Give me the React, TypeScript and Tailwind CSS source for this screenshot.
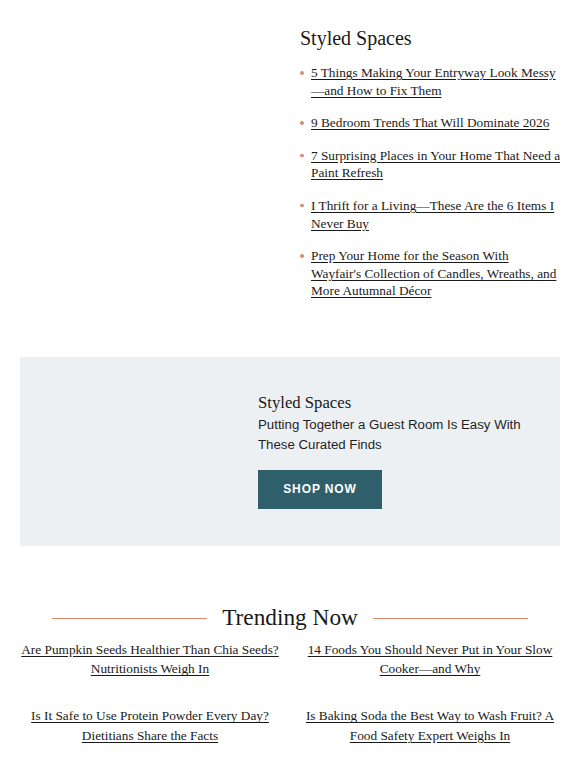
import React from "react";

const styled: React.ReactNode[] = [
  "5 Things Making Your Entryway Look Messy—and How to Fix Them",
  "9 Bedroom Trends That Will Dominate 2026",
  "7 Surprising Places in Your Home That Need a Paint Refresh",
  "I Thrift for a Living—These Are the 6 Items I Never Buy",
  <>
    Prep Your Home for the Season With
    <br />
    Wayfair's Collection of Candles, Wreaths, and More Autumnal Décor
  </>,
];

const trending = [
  "Are Pumpkin Seeds Healthier Than Chia Seeds? Nutritionists Weigh In",
  "14 Foods You Should Never Put in Your Slow Cooker—and Why",
  "Is It Safe to Use Protein Powder Every Day? Dietitians Share the Facts",
  "Is Baking Soda the Best Way to Wash Fruit? A Food Safety Expert Weighs In",
];

export default function App() {
  return (
    <div className="w-[580px] bg-white text-[#1a1a1a] font-['Liberation_Serif','Times_New_Roman',serif]">
      <div className="flex pl-[300px] pt-[25px]">
        <div className="w-[262px]">
          <h2 className="text-[20px] leading-[26px] font-normal">Styled Spaces</h2>
          <ul className="mt-[13px] flex flex-col gap-[15px]">
            {styled.map((t, i) => (
              <li key={i} className="flex text-[13.3px] leading-[17.6px]">
                <span className="w-[11px] shrink-0 pt-[7px]">
                  <span className="block w-[3.5px] h-[3.5px] rounded-full bg-[#d98b73]" />
                </span>
                <a href="#" className="underline underline-offset-[2px]">{t}</a>
              </li>
            ))}
          </ul>
        </div>
      </div>

      <div className="mx-5 mt-[57px] bg-[#edf0f2] pl-[238px] pr-5 pt-[35px] pb-[37px]">
        <div className="text-[16.7px] leading-[22px]">Styled Spaces</div>
        <div className="mt-[1px] text-[13.25px] leading-[20px] font-['Liberation_Sans',Arial,sans-serif] text-[#1f1f1f]">
          Putting Together a Guest Room Is Easy With These Curated Finds
        </div>
        <div className="mt-[15px] flex">
          <a href="#" className="flex items-center justify-center w-[124px] h-[39px] bg-[#2e5f6a] text-white font-['Liberation_Sans',Arial,sans-serif] font-bold text-[12px] tracking-[0.9px]">
            SHOP NOW
          </a>
        </div>
      </div>

      <div className="mt-[56px] flex items-center justify-center gap-[15px] px-[52px]">
        <div className="flex-1 h-[1px] mt-[4px] bg-[#e4876d]" />
        <h2 className="text-[23.3px] leading-[30px] font-normal">Trending Now</h2>
        <div className="flex-1 h-[1px] mt-[4px] bg-[#e4876d]" />
      </div>

      <div className="grid grid-cols-2 gap-x-5 gap-y-[27.5px] px-5 mt-[8px] pb-[30px]">
        {trending.map((t) => (
          <a key={t} href="#" className="text-center text-[13.3px] leading-[19.5px] underline underline-offset-[2px]">
            {t}
          </a>
        ))}
      </div>
    </div>
  );
}
